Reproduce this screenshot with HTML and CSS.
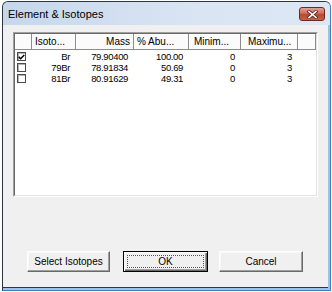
FILE: index.html
```html
<!DOCTYPE html>
<html lang="en">
<head>
  <meta charset="UTF-8">
  <title>Element &amp; Isotopes</title>
  <link rel="stylesheet" href="styles.css">
</head>
<body>

  <!-- Dialog window -->
  <div class="window">
    <div class="title-bar">
      <span class="title">Element &amp; Isotopes</span>
      <div class="close-btn">
        <svg width="11" height="9" viewBox="0 0 11 9">
          <path d="M2 1.5 L9 7.5 M9 1.5 L2 7.5" stroke="#5a2a22" stroke-width="3.2" stroke-linecap="square"/>
          <path d="M2 1.5 L9 7.5 M9 1.5 L2 7.5" stroke="#fff" stroke-width="1.6" stroke-linecap="square"/>
        </svg>
      </div>
    </div>

    <div class="client">
      <!-- Isotope list -->
      <div class="list">
        <div class="list-inner">
          <div class="list-header">
            <div class="col-head"></div>
            <div class="col-head left">Isoto...</div>
            <div class="col-head right">Mass</div>
            <div class="col-head left">% Abu...</div>
            <div class="col-head left pad5">Minim...</div>
            <div class="col-head left pad7">Maximu...</div>
            <div class="col-head"></div>
          </div>

          <div class="list-row">
            <div class="cell check"><span class="checkbox">
              <svg width="7" height="6" viewBox="0 0 7 6"><path d="M0.7 2.9 L2.6 4.8 L6.3 1" fill="none" stroke="#000" stroke-width="1.5"/></svg>
            </span></div>
            <div class="cell">Br</div>
            <div class="cell">79.90400</div>
            <div class="cell">100.00</div>
            <div class="cell">0</div>
            <div class="cell">3</div>
            <div class="cell"></div>
          </div>
          <div class="list-row">
            <div class="cell check"><span class="checkbox"></span></div>
            <div class="cell">79Br</div>
            <div class="cell">78.91834</div>
            <div class="cell">50.69</div>
            <div class="cell">0</div>
            <div class="cell">3</div>
            <div class="cell"></div>
          </div>
          <div class="list-row">
            <div class="cell check"><span class="checkbox"></span></div>
            <div class="cell">81Br</div>
            <div class="cell">80.91629</div>
            <div class="cell">49.31</div>
            <div class="cell">0</div>
            <div class="cell">3</div>
            <div class="cell"></div>
          </div>
        </div>
      </div>

      <!-- Dialog buttons -->
      <div class="buttons">
        <div class="btn select-btn">Select Isotopes</div>
        <div class="btn ok-btn"><span class="focus">OK</span></div>
        <div class="btn cancel-btn">Cancel</div>
      </div>
    </div>
  </div>

</body>
</html>
```

FILE: styles.css
```css
/* General Styles */
body {
  margin: 0;
  background: #fff;
  font-family: "Liberation Sans", Arial, sans-serif;
  color: #000;
}

/* Window frame */
.window {
  box-sizing: border-box;
  width: 329px;
  height: 290px;
  margin: 1px 0 0 2px;
  border: 1px solid #2a3646;
  border-right-color: #3f7fc0;
  border-bottom-color: #3f7fc0;
  border-radius: 6px 6px 0 0;
  background: #9fc1e6;
  display: flex;
  flex-direction: column;
  overflow: hidden;
}

.title-bar {
  height: 23px;
  flex-shrink: 0;
  display: flex;
  align-items: center;
  justify-content: space-between;
  padding: 1px 5px 0 5px;
  box-sizing: border-box;
  background: linear-gradient(to right, #c6d7ec, #d9e5f3 60%, #dce7f4);
}

.title {
  font-size: 11px;
  color: #000;
}

.close-btn {
  width: 26px;
  height: 14px;
  box-sizing: border-box;
  border: 1px solid #6b2a20;
  border-radius: 3px;
  background: linear-gradient(to bottom, #e0a497, #cf6a58 45%, #c0432e 55%, #c9604a);
  display: flex;
  align-items: center;
  justify-content: center;
}

/* Client area */
.client {
  flex: 1;
  margin: 0 2px 2px 0;
  background: #f0f0f0;
  border-bottom: 1px solid #2a3646;
  display: flex;
  flex-direction: column;
}

/* List view */
.list {
  width: 305px;
  height: 165px;
  box-sizing: border-box;
  margin: 7px 0 0 10px;
  border: 1px solid;
  border-color: #a0a0a0 #fff #fff #a0a0a0;
}

.list-inner {
  height: 100%;
  box-sizing: border-box;
  border: 1px solid;
  border-color: #696969 #e3e3e3 #e3e3e3 #696969;
  background: #fff;
}

.list-header,
.list-row {
  display: grid;
  grid-template-columns: 17px 44px 58px 55px 52px 57px 1fr;
}

.list-header {
  height: 16px;
}

.col-head {
  font-size: 10px;
  line-height: 16px;
  white-space: nowrap;
  overflow: hidden;
  padding: 0 4px 0 3px;
  background: #fbfbfb;
  box-shadow: inset -1px -1px 0 #8c8c8c, inset 1px 1px 0 #fff;
}

.col-head.right {
  text-align: right;
}

.col-head.pad5 {
  padding-left: 5px;
}

.col-head.pad7 {
  padding-left: 7px;
}

.list-row {
  height: 11px;
}

.list-header + .list-row {
  margin-top: 1px;
}

.cell {
  font-size: 9.5px;
  line-height: 11px;
  letter-spacing: -0.35px;
  text-align: right;
  padding-right: 6px;
  white-space: nowrap;
}

.cell.check {
  padding: 0;
  display: flex;
  align-items: center;
}

.checkbox {
  width: 9px;
  height: 9px;
  margin-left: 2px;
  box-sizing: border-box;
  border: 1px solid #4a4a4a;
  background: #fff;
  box-shadow: inset 1px 1px 0 #b0b0b0;
  display: flex;
  align-items: center;
  justify-content: center;
}

/* Buttons */
.buttons {
  display: flex;
  margin: 54px 0 0 24px;
}

.btn {
  height: 21px;
  box-sizing: border-box;
  font-size: 10px;
  background: #f0f0f0;
  border: 1px solid;
  border-color: #fff #696969 #696969 #fff;
  box-shadow: inset -1px -1px 0 #a0a0a0, inset 1px 1px 0 #f8f8f8;
  display: flex;
  align-items: center;
  justify-content: center;
}

.select-btn {
  width: 83px;
}

.ok-btn {
  width: 85px;
  margin-left: 13px;
  border-color: #000;
  box-shadow: inset 1px 1px 0 #fff, inset -1px -1px 0 #696969, inset -2px -2px 0 #a0a0a0;
  padding: 3px;
}

.focus {
  flex: 1;
  height: 100%;
  box-sizing: border-box;
  border: 1px dotted #555;
  display: flex;
  align-items: center;
  justify-content: center;
}

.cancel-btn {
  width: 84px;
  margin-left: 11px;
}
```
